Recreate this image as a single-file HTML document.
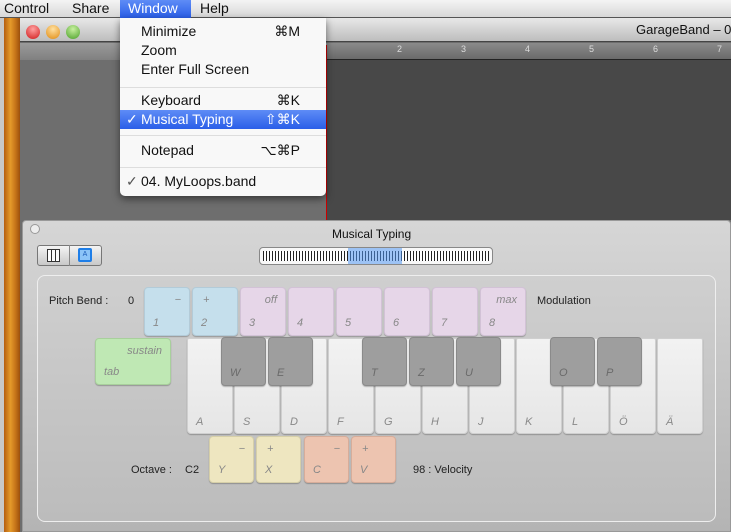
<!DOCTYPE html>
<html><head><meta charset="utf-8"><style>
*{margin:0;padding:0;box-sizing:border-box}
body{width:731px;height:532px;overflow:hidden;position:relative;font-family:"Liberation Sans",sans-serif;background:#6d6d6d;white-space:nowrap}
.a{position:absolute}
.mb{left:0;top:0;width:731px;height:18px;background:linear-gradient(#f4f4f4,#d8d8d8);border-bottom:1px solid #555;font-size:14px;color:#111}
.mb span{position:absolute;top:0;line-height:17px}
.menu{left:120px;top:18px;width:206px;height:178px;background:#f8f8f8;border-radius:0 0 5px 5px;box-shadow:0 3px 8px rgba(0,0,0,.5);font-size:14px;color:#111}
.menu div{position:absolute;left:0;width:206px;height:19px;line-height:19px}
.menu span{position:absolute;top:0}
.menu .t{left:21px}
.menu .k{right:26px}
.menu .c{left:6px}
.menu .sep{height:1px;background:#ddd}
.key{position:absolute;border-radius:4px;font-style:italic;font-size:11px;color:#888;box-shadow:0 1px 1px rgba(0,0,0,.25)}
.key i{position:absolute;left:8px;bottom:6px}
.key b{position:absolute;right:8px;top:6px;font-weight:normal}
.tk{width:46px;height:49px}
.bl{background:#c5dfec;border:1px solid #b3cbd8}
.pu{background:#e6d6e8;border:1px solid #d2c2d6}
.wk{width:46px;height:96px;top:338px;background:linear-gradient(#f2f2f2,#e6e6e6);border:1px solid #cfcfcf;border-radius:2px 2px 4px 4px}
.wk i{left:8px;bottom:5px}
.bk{width:45px;height:49px;top:337px;background:#9e9e9e;border:1px solid #8a8a8a;color:#6a6a6a}
.ye{background:#eee6c0;border:1px solid #d6cfa8;width:45px;height:47px;top:436px}
.or{background:#edc4b0;border:1px solid #d7ad9a;width:45px;height:47px;top:436px}
.lbl{font-size:11px;color:#222}
</style></head><body>
<div class="a mb">
<span style="left:4px">Control</span><span style="left:72px">Share</span>
<span style="left:120px;width:71px;height:18px;background:linear-gradient(#5e8cf6,#2a5ee8);color:#fff;padding-left:8px">Window</span>
<span style="left:200px">Help</span></div>
<div class="a" style="left:0;top:18px;width:4px;height:514px;background:#c8c8c8"></div>
<div class="a" style="left:4px;top:18px;width:16px;height:514px;background:linear-gradient(90deg,#b55e10,#e59a2a 40%,#c8761a 70%,#9c500c)"></div>
<div class="a" style="left:20px;top:18px;width:711px;height:24px;background:linear-gradient(#e8e8e8,#bdbdbd);border-bottom:1px solid #444"></div>
<div class="a" style="left:26px;top:25px;width:14px;height:14px;border-radius:50%;background:radial-gradient(circle at 50% 30%,#ffa0a0,#d01818)"></div>
<div class="a" style="left:46px;top:25px;width:14px;height:14px;border-radius:50%;background:radial-gradient(circle at 50% 30%,#ffe0a0,#e08a10)"></div>
<div class="a" style="left:66px;top:25px;width:14px;height:14px;border-radius:50%;background:radial-gradient(circle at 50% 30%,#c8f0a0,#4aa028)"></div>
<div class="a" style="left:636px;top:22px;font-size:13px;color:#111">GarageBand – 0</div>
<div class="a" style="left:20px;top:43px;width:307px;height:17px;background:linear-gradient(#9a9a9a,#808080)"></div>
<div class="a" style="left:20px;top:60px;width:307px;height:160px;background:#6e6e6e"></div>
<div class="a" style="left:327px;top:43px;width:404px;height:17px;background:linear-gradient(#8a8a8a,#6a6a6a);border-bottom:1px solid #222;font-size:9px;color:#ddd">
<span class="a" style="left:70px;top:1px">2</span><span class="a" style="left:134px;top:1px">3</span><span class="a" style="left:198px;top:1px">4</span><span class="a" style="left:262px;top:1px">5</span><span class="a" style="left:326px;top:1px">6</span><span class="a" style="left:390px;top:1px">7</span></div>
<div class="a" style="left:327px;top:60px;width:404px;height:160px;background:#484848"></div>
<div class="a" style="left:326px;top:45px;width:1px;height:175px;background:#c00"></div>
<div class="a menu">
<div style="top:4px"><span class="t">Minimize</span><span class="k">⌘M</span></div>
<div style="top:23px"><span class="t">Zoom</span></div>
<div style="top:42px"><span class="t">Enter Full Screen</span></div>
<div class="sep" style="top:69px"></div>
<div style="top:73px"><span class="t">Keyboard</span><span class="k">⌘K</span></div>
<div style="top:92px;background:linear-gradient(#5e8cf6,#2a5ee8);color:#fff"><span class="c">✓</span><span class="t">Musical Typing</span><span class="k">⇧⌘K</span></div>
<div class="sep" style="top:117px"></div>
<div style="top:123px"><span class="t">Notepad</span><span class="k">⌥⌘P</span></div>
<div class="sep" style="top:149px"></div>
<div style="top:154px"><span class="c" style="color:#555">✓</span><span class="t">04. MyLoops.band</span></div>
</div>
<div class="a" style="left:22px;top:220px;width:709px;height:312px;background:linear-gradient(#d6d6d6,#b4b4b4);border-radius:4px 4px 0 0;border:1px solid #999"></div>
<div class="a" style="left:30px;top:224px;width:10px;height:10px;border-radius:50%;background:#eee;border:1px solid #999"></div>
<div class="a" style="left:332px;top:227px;font-size:12px;color:#111">Musical Typing</div>
<div class="a" style="left:37px;top:245px;width:65px;height:21px;border:1px solid #777;border-radius:3px;background:linear-gradient(#f4f4f4,#c8c8c8)"></div>
<div class="a" style="left:69px;top:245px;width:1px;height:21px;background:#888"></div>
<div class="a" style="left:47px;top:249px;width:13px;height:13px;border:1px solid #333;background:repeating-linear-gradient(90deg,#fff 0 3px,#333 3px 4px)"></div>
<div class="a" style="left:78px;top:248px;width:14px;height:14px;border:2px solid #1e7ee8;border-radius:2px;background:#8cc4f8;font-size:7px;color:#1e5eb8;text-align:center;line-height:10px">A</div>
<div class="a" style="left:259px;top:247px;width:234px;height:18px;border:1px solid #888;border-radius:4px;background:#f8f8f8"></div>
<div class="a" style="left:263px;top:251px;width:226px;height:10px;background:repeating-linear-gradient(90deg,#222 0 1px,#fff 1px 3px,#222 3px 4px,#fff 4px 6px)"></div>
<div class="a" style="left:348px;top:248px;width:54px;height:16px;background:rgba(80,150,240,.55)"></div>
<div class="a" style="left:37px;top:275px;width:679px;height:247px;border:1px solid #eee;border-radius:8px;background:linear-gradient(#cfcfcf,#bcbcbc)"></div>
<div class="a lbl" style="left:49px;top:295px">Pitch Bend :</div><div class="a lbl" style="left:128px;top:295px">0</div>
<div class="a lbl" style="left:537px;top:295px">Modulation</div>
<div class="key tk bl" style="left:144px;top:287px"><b>−</b><i>1</i></div>
<div class="key tk bl" style="left:192px;top:287px"><b style="left:10px;right:auto">+</b><i>2</i></div>
<div class="key tk pu" style="left:240px;top:287px"><b>off</b><i>3</i></div>
<div class="key tk pu" style="left:288px;top:287px"><i>4</i></div>
<div class="key tk pu" style="left:336px;top:287px"><i>5</i></div>
<div class="key tk pu" style="left:384px;top:287px"><i>6</i></div>
<div class="key tk pu" style="left:432px;top:287px"><i>7</i></div>
<div class="key tk pu" style="left:480px;top:287px"><b>max</b><i>8</i></div>
<div class="key" style="left:95px;top:338px;width:76px;height:47px;background:#bfe8b4;border:1px solid #a8d09c"><b>sustain</b><i>tab</i></div>
<div class="key wk" style="left:187px"><i>A</i></div>
<div class="key wk" style="left:234px"><i>S</i></div>
<div class="key wk" style="left:281px"><i>D</i></div>
<div class="key wk" style="left:328px"><i>F</i></div>
<div class="key wk" style="left:375px"><i>G</i></div>
<div class="key wk" style="left:422px"><i>H</i></div>
<div class="key wk" style="left:469px"><i>J</i></div>
<div class="key wk" style="left:516px"><i>K</i></div>
<div class="key wk" style="left:563px"><i>L</i></div>
<div class="key wk" style="left:610px"><i>Ö</i></div>
<div class="key wk" style="left:657px"><i>Ä</i></div>
<div class="key bk" style="left:221px"><i>W</i></div>
<div class="key bk" style="left:268px"><i>E</i></div>
<div class="key bk" style="left:362px"><i>T</i></div>
<div class="key bk" style="left:409px"><i>Z</i></div>
<div class="key bk" style="left:456px"><i>U</i></div>
<div class="key bk" style="left:550px"><i>O</i></div>
<div class="key bk" style="left:597px"><i>P</i></div>
<div class="a lbl" style="left:131px;top:464px">Octave :</div><div class="a lbl" style="left:185px;top:464px">C2</div>
<div class="key ye" style="left:209px"><b>−</b><i>Y</i></div>
<div class="key ye" style="left:256px"><b style="left:10px;right:auto">+</b><i>X</i></div>
<div class="key or" style="left:304px"><b>−</b><i>C</i></div>
<div class="key or" style="left:351px"><b style="left:10px;right:auto">+</b><i>V</i></div>
<div class="a lbl" style="left:413px;top:464px">98 : Velocity</div>
</body></html>
